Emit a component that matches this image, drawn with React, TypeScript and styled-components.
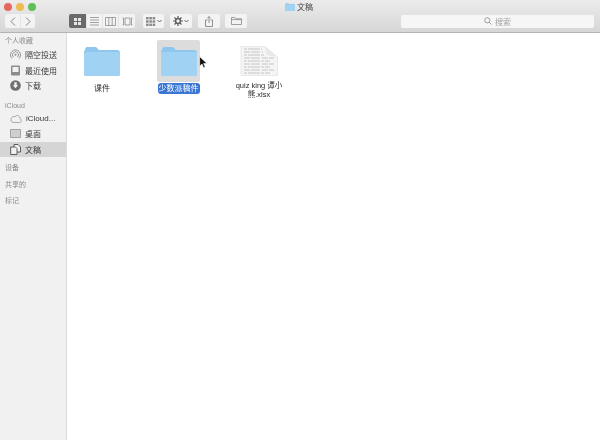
import * as React from 'react'
import styled, { createGlobalStyle } from 'styled-components'

const Global = createGlobalStyle`
  html, body {
    margin: 0;
    padding: 0;
    background: #fff;
  }
  body {
    font-family: "Liberation Sans", "Noto Sans CJK SC", sans-serif;
  }
`

// the reference is a soft, upscaled capture
const Window = styled.div`
  width: 600px;
  height: 440px;
  display: flex;
  flex-direction: column;
  overflow: hidden;
  position: relative;
  filter: blur(0.4px);
`

const Toolbar = styled.div`
  height: 33px;
  flex: none;
  box-sizing: border-box;
  background: linear-gradient(#ececec, #d6d6d6);
  border-bottom: 1px solid #b4b4b4;
  display: flex;
  flex-direction: column;
`

const TitleRow = styled.div`
  height: 13px;
  flex: none;
  display: flex;
  align-items: center;
  padding-left: 4px;
  position: relative;
`

const Lights = styled.div`
  display: flex;
  gap: 4px;
`

const Light = styled.span<{ $color: string }>`
  width: 8px;
  height: 8px;
  border-radius: 50%;
  background: ${(p) => p.$color};
`

const Title = styled.div`
  position: absolute;
  left: 285px;
  top: 0;
  height: 13px;
  display: flex;
  align-items: center;
  gap: 2px;
  font-size: 8px;
  color: #444;
`

const ControlRow = styled.div`
  display: flex;
  align-items: center;
  height: 14px;
  margin-top: 1px;
  padding-left: 5px;
  padding-right: 6px;
`

const Group = styled.div<{ $gap?: number; $width?: number }>`
  display: flex;
  width: ${(p) => (p.$width ? `${p.$width}px` : 'auto')};
  margin-right: ${(p) => p.$gap ?? 0}px;
  border-radius: 2px;
  overflow: hidden;
  flex: none;
`

const ToolButton = styled.div<{ $width: number; $active?: boolean }>`
  width: ${(p) => p.$width}px;
  height: 14px;
  display: flex;
  align-items: center;
  justify-content: center;
  gap: 1px;
  background: ${(p) => (p.$active ? '#6a6a6a' : '#f3f3f3')};
  color: ${(p) => (p.$active ? '#e8e8e8' : '#808080')};
  border-right: 1px solid #e4e4e4;
  box-sizing: border-box;
  &:last-child {
    border-right: none;
  }
`

const Search = styled.div`
  margin-left: auto;
  width: 193px;
  height: 13px;
  background: #f6f6f6;
  border-radius: 2px;
  display: flex;
  align-items: center;
  justify-content: center;
  gap: 3px;
  font-size: 8px;
  color: #a2a2a2;
`

const Body = styled.div`
  flex: 1;
  display: flex;
  min-height: 0;
`

const Sidebar = styled.div`
  width: 67px;
  flex: none;
  box-sizing: border-box;
  background: #f1f1f1;
  border-right: 1px solid #dcdcdc;
  padding-top: 2px;
`

const Heading = styled.div<{ $top?: number; $bottom?: number }>`
  height: 12px;
  line-height: 12px;
  margin-top: ${(p) => p.$top ?? 0}px;
  margin-bottom: ${(p) => p.$bottom ?? 0}px;
  padding-left: 5px;
  font-size: 7px;
  color: #8a8a8a;
`

const Item = styled.div<{ $active?: boolean }>`
  height: 15.5px;
  display: flex;
  align-items: center;
  gap: 4px;
  padding-left: 10px;
  font-size: 8px;
  color: #3a3a3a;
  background: ${(p) => (p.$active ? '#d5d5d5' : 'transparent')};
  svg {
    flex: none;
  }
`

const Files = styled.div`
  flex: 1;
  display: grid;
  grid-template-columns: 70px 83px 78px;
  align-items: start;
  justify-content: start;
  padding-top: 7px;
  background: #fff;
`

const Cell = styled.div`
  display: flex;
  flex-direction: column;
  align-items: center;
  position: relative;
`

const Thumb = styled.div<{ $selected?: boolean }>`
  width: 43px;
  height: 42px;
  display: flex;
  align-items: center;
  justify-content: center;
  background: ${(p) => (p.$selected ? '#dcdcdc' : 'transparent')};
  border-radius: 2px;
`

const Label = styled.div<{ $selected?: boolean }>`
  margin-top: 1px;
  padding: 0 1px;
  height: 11px;
  line-height: 11px;
  font-size: 8px;
  text-align: center;
  border-radius: 3px;
  color: ${(p) => (p.$selected ? '#fff' : '#2a2a2a')};
  background: ${(p) => (p.$selected ? '#3a76d2' : 'transparent')};
`

const MultiLabel = styled(Label)`
  height: auto;
  line-height: 9px;
  margin-top: -1px;
  width: 50px;
  font-size: 7.5px;
`

const Pointer = styled.svg`
  position: absolute;
  left: 62px;
  top: 16px;
`

const FolderIcon = ({ w = 36, h = 30 }: { w?: number; h?: number }) => (
  <svg width={w} height={h} viewBox="0 0 36 30">
    <path d="M1 4.5 Q1 1 3.5 1 H11 Q13 1 14 3 L14.6 4 H33 Q36 4 36 7 V27.5 Q36 30 33.5 30 H2.5 Q0 30 0 27.5 V5 Z" fill="#8fc6ee" />
    <path d="M0 8 Q0 6 2 6 H34 Q36 6 36 8 V27.5 Q36 30 33.5 30 H2.5 Q0 30 0 27.5 Z" fill="#a0d2f4" />
  </svg>
)

const SheetIcon = () => (
  <svg width="38" height="30" viewBox="0 0 38 30">
    <path d="M1 0.5 H25 L37.5 11 V29.5 H1 Z" fill="#f5f5f5" stroke="#dcdcdc" strokeWidth="0.6" />
    <path d="M25 0.5 L27 9 L37.5 11 Z" fill="#e8e8e8" />
    {[3, 6, 9, 12, 15, 18, 21, 24, 27].map((y, i) => (
      <path key={y} d={`M4 ${y} H${y < 11 ? 22 + i : i % 2 ? 34 : 30}`} stroke="#b8b8b8" strokeWidth="0.8" strokeDasharray={i % 2 ? '6 1 9 2' : '3 1 12 1'} />
    ))}
  </svg>
)

const ViewIcon = ({ kind }: { kind: 'grid' | 'list' | 'cols' | 'flow' }) => (
  <svg width="11" height="9" viewBox="0 0 11 9" fill="none" stroke="currentColor" strokeWidth="0.7">
    {kind === 'grid' && (
      <g fill="currentColor" stroke="none">
        <rect x="2" y="1" width="3" height="3" />
        <rect x="6" y="1" width="3" height="3" />
        <rect x="2" y="5" width="3" height="3" />
        <rect x="6" y="5" width="3" height="3" />
      </g>
    )}
    {kind === 'list' && <path d="M1 .5H10M1 3H10M1 5.5H10M1 8H10" />}
    {kind === 'cols' && <path d="M.5 .5H10.5V8.5H.5ZM3.8 .5V8.5M7.2 .5V8.5" />}
    {kind === 'flow' && <path d="M3 1H8V8H3ZM.5 1H1.5V8H.5M10.5 1H9.5V8H10.5" />}
  </svg>
)

const Chevron = () => (
  <svg width="5" height="4" viewBox="0 0 5 4" fill="none" stroke="#555" strokeWidth="0.9">
    <path d="M.5 1 2.5 3 4.5 1" />
  </svg>
)

const ArrangeIcon = () => (
  <svg width="10" height="9" viewBox="0 0 10 9" fill="#8a8a8a">
    {[0, 3.3, 6.6].map((y) =>
      [0, 3.3, 6.6].map((x) => <rect key={`${x}-${y}`} x={x} y={y} width="2.6" height="2.4" />),
    )}
  </svg>
)

const GearIcon = () => (
  <svg width="10" height="10" viewBox="0 0 10 10">
    <circle cx="5" cy="5" r="2.4" fill="none" stroke="#5f5f5f" strokeWidth="1.5" />
    <path d="M5 0V2M5 8V10M0 5H2M8 5H10M1.5 1.5 3 3M7 7 8.5 8.5M8.5 1.5 7 3M3 7 1.5 8.5" stroke="#5f5f5f" strokeWidth="1.2" />
  </svg>
)

const ShareIcon = () => (
  <svg width="8" height="11" viewBox="0 0 8 11" fill="none" stroke="#777" strokeWidth="0.8">
    <path d="M2.5 4H.5V10.5H7.5V4H5.5M4 7V.7M2.3 2.3 4 .6 5.7 2.3" />
  </svg>
)

const TagIcon = () => (
  <svg width="11" height="8" viewBox="0 0 11 8" fill="none" stroke="#888" strokeWidth="0.8">
    <path d="M.5 7.5V.5H4L5 1.8H10.5V7.5ZM.5 2.6H10.5" />
  </svg>
)

const Arrow = ({ d }: { d: string }) => (
  <svg width="6" height="9" viewBox="0 0 6 9" fill="none" stroke="#777" strokeWidth="0.9">
    <path d={d} />
  </svg>
)

const AirdropIcon = () => (
  <svg width="11" height="11" viewBox="0 0 11 11" fill="none" stroke="#8c8c8c" strokeWidth="0.9">
    <path d="M2 9.5A5 5 0 1 1 9 9.5M3.4 8A3 3 0 1 1 7.6 8" />
    <circle cx="5.5" cy="5.7" r="1" fill="#8c8c8c" stroke="none" />
  </svg>
)

const RecentIcon = () => (
  <svg width="11" height="11" viewBox="0 0 11 11">
    <rect x="1" y="0.5" width="9" height="10" rx="1" fill="#8c8c8c" />
    <rect x="2.5" y="2" width="6" height="5" fill="#f1f1f1" />
  </svg>
)

const DownloadIcon = () => (
  <svg width="11" height="11" viewBox="0 0 11 11">
    <circle cx="5.5" cy="5.5" r="5.3" fill="#6f6f6f" />
    <path d="M4.3 2.3H6.7V5.2H8.2L5.5 8.3 2.8 5.2H4.3Z" fill="#f1f1f1" />
  </svg>
)

const CloudIcon = () => (
  <svg width="12" height="9" viewBox="0 0 12 9" fill="none" stroke="#8c8c8c" strokeWidth="0.7">
    <path d="M3 8.5H9.5A2 2 0 0 0 10 4.6 2.8 2.8 0 0 0 5 2.6 2.8 2.8 0 0 0 3 8.5Z" />
  </svg>
)

const DesktopIcon = () => (
  <svg width="11" height="9" viewBox="0 0 11 9">
    <rect x="0.4" y="0.4" width="10.2" height="8.2" rx="0.6" fill="#cfcfcf" stroke="#8c8c8c" strokeWidth="0.8" />
  </svg>
)

const DocsIcon = () => (
  <svg width="11" height="11" viewBox="0 0 11 11" fill="#f2f2f2" stroke="#4c4c4c" strokeWidth="0.9">
    <path d="M4 .5H8L10.5 3V8H4Z" />
    <path d="M.7 3H5.5L7 4.5V10.5H.7Z" />
  </svg>
)

const SearchGlass = () => (
  <svg width="8" height="8" viewBox="0 0 8 8" fill="none" stroke="#8a8a8a" strokeWidth="0.8">
    <circle cx="3.3" cy="3.3" r="2.6" />
    <path d="M5.2 5.2 7.6 7.6" />
  </svg>
)

export default function App() {
  return (
    <>
      <Global />
      <Window>
        <Toolbar>
          <TitleRow>
            <Lights>
              <Light $color="#e5685f" />
              <Light $color="#eebc50" />
              <Light $color="#5fbf58" />
            </Lights>
            <Title>
              <FolderIcon w={10} h={8} />
              文稿
            </Title>
          </TitleRow>
          <ControlRow>
            <Group $gap={34} $width={30}>
              <ToolButton $width={16}><Arrow d="M5 .5 1 4.5 5 8.5" /></ToolButton>
              <ToolButton $width={14}><Arrow d="M1 .5 5 4.5 1 8.5" /></ToolButton>
            </Group>
            <Group $gap={8}>
              <ToolButton $width={18} $active><ViewIcon kind="grid" /></ToolButton>
              <ToolButton $width={16}><ViewIcon kind="list" /></ToolButton>
              <ToolButton $width={16}><ViewIcon kind="cols" /></ToolButton>
              <ToolButton $width={16}><ViewIcon kind="flow" /></ToolButton>
            </Group>
            <Group $gap={6}>
              <ToolButton $width={21}><ArrangeIcon /><Chevron /></ToolButton>
            </Group>
            <Group $gap={6}>
              <ToolButton $width={22}><GearIcon /><Chevron /></ToolButton>
            </Group>
            <Group $gap={5}>
              <ToolButton $width={22}><ShareIcon /></ToolButton>
            </Group>
            <Group>
              <ToolButton $width={22}><TagIcon /></ToolButton>
            </Group>
            <Search>
              <SearchGlass />
              搜索
            </Search>
          </ControlRow>
        </Toolbar>
        <Body>
          <Sidebar>
            <Heading>个人收藏</Heading>
            <Item><AirdropIcon />隔空投送</Item>
            <Item><RecentIcon />最近使用</Item>
            <Item><DownloadIcon />下载</Item>
            <Heading $top={6} $bottom={-1}>iCloud</Heading>
            <Item><CloudIcon />iCloud...</Item>
            <Item><DesktopIcon />桌面</Item>
            <Item $active><DocsIcon />文稿</Item>
            <Heading $top={5}>设备</Heading>
            <Heading $top={5}>共享的</Heading>
            <Heading $top={4}>标记</Heading>
          </Sidebar>
          <Files>
            <Cell>
              <Thumb><FolderIcon /></Thumb>
              <Label>课件</Label>
            </Cell>
            <Cell>
              <Thumb $selected><FolderIcon /></Thumb>
              <Label $selected>少数派稿件</Label>
              <Pointer width="9" height="13" viewBox="0 0 9 13">
                <path d="M.6.6V10.2L3 8l1.6 3.8 1.6-.7L4.6 7.5H8Z" fill="#111" stroke="#fff" strokeWidth="0.6" />
              </Pointer>
            </Cell>
            <Cell>
              <Thumb><SheetIcon /></Thumb>
              <MultiLabel>quiz king 谭小熊.xlsx</MultiLabel>
            </Cell>
          </Files>
        </Body>
      </Window>
    </>
  )
}
